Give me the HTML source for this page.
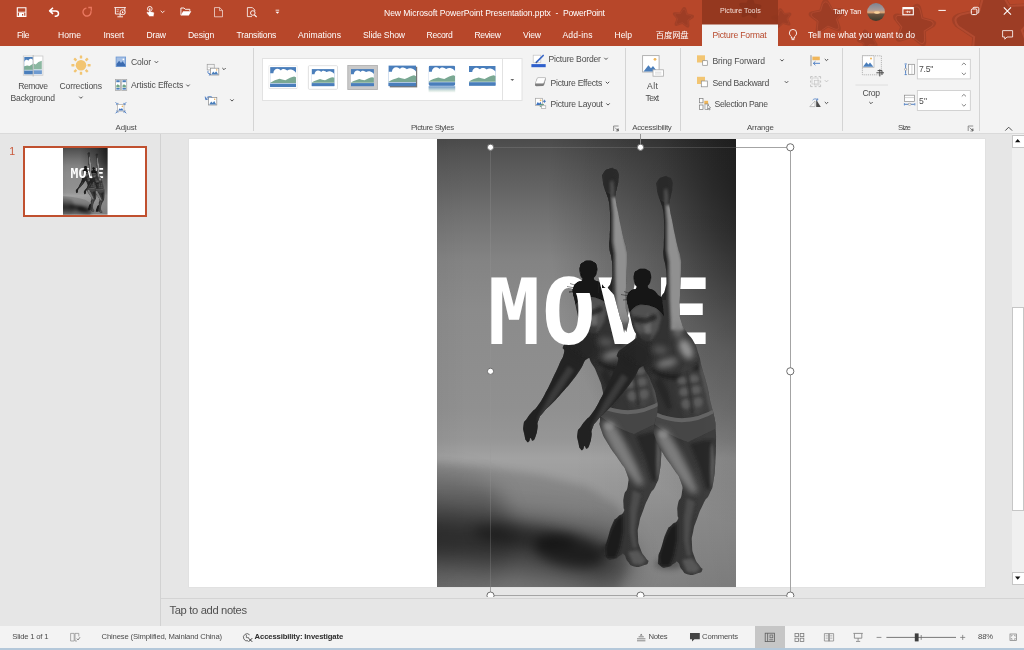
<!DOCTYPE html>
<html lang="en">
<head>
<meta charset="utf-8">
<title>New Microsoft PowerPoint Presentation.pptx - PowerPoint</title>
<style>
html,body{margin:0;padding:0}
body{width:1024px;height:650px;overflow:hidden;position:relative;background:#e6e6e6;font-family:"Liberation Sans","Noto Sans CJK SC",sans-serif;font-size:8.6px;color:#4c4c4c}
.a{position:absolute}
.t{position:absolute;white-space:nowrap;line-height:12px;height:12px}
.w{color:#fff}
svg{position:absolute;overflow:visible}
#titlebar{left:0;top:0;width:1024px;height:46px;background:#b7472a;overflow:hidden}
#ribbon{left:0;top:46px;width:1024px;height:87px;background:#f3f3f3}
.sep{position:absolute;width:1px;background:#d4d4d4;top:48px;height:83px}
.chev{position:absolute;width:4px;height:4px}
</style>
</head>
<body>
<div id="titlebar" class="a">
<svg width="1024" height="46" viewBox="0 0 1024 46" style="left:0;top:0">
<defs>
<path id="star" d="M0,-10 Q1.2,-10 2,-8.4 L3.6,-4.6 L8.2,-4.2 Q10.6,-3.6 9.2,-1.4 L5.8,1.6 L6.8,6 Q7,8.8 4.4,7.8 L0,5.4 L-4.4,7.8 Q-7,8.8 -6.8,6 L-5.8,1.6 L-9.2,-1.4 Q-10.6,-3.6 -8.2,-4.2 L-3.6,-4.6 L-2,-8.4 Q-1.2,-10 0,-10Z"/>
</defs>
<g id="stars">
<g fill="#a24027"><use href="#star" transform="translate(683,18) scale(1.1) rotate(8)"/>
<use href="#star" transform="translate(782,18.500) scale(1.05) rotate(-12)"/>
<use href="#star" transform="translate(827,17.600) scale(1.85) rotate(-6)"/>
<use href="#star" transform="translate(913.600,26) scale(2.25) rotate(10)"/>
<use href="#star" transform="translate(997,27) scale(4.500) rotate(-8)"/>
<use href="#star" transform="translate(868,40) scale(1.1) rotate(-20)"/></g>
<g fill="#9d3d25" stroke="#b24a30" stroke-width="0.5" vector-effect="non-scaling-stroke"><use href="#star" transform="translate(683,18) scale(0.86) rotate(8)"/>
<use href="#star" transform="translate(782,18.500) scale(0.82) rotate(-12)"/>
<use href="#star" transform="translate(827,17.600) scale(1.58) rotate(-6)"/>
<use href="#star" transform="translate(913.600,26) scale(1.95) rotate(10)"/>
<use href="#star" transform="translate(997,27) scale(4.150) rotate(-8)"/>
<use href="#star" transform="translate(868,40) scale(0.86) rotate(-20)"/></g>
</g>
<rect x="702" y="0" width="76" height="25" fill="#8f351d" opacity="0.86"/>
<use href="#star" transform="translate(750,8.500) scale(1.15) rotate(5)" fill="#853019" opacity="0.7"/>
<rect x="702" y="24.5" width="76" height="22" fill="#f3f3f3"/>
</svg>
<svg width="300" height="24" viewBox="0 0 300 24" style="left:0;top:0" fill="none" stroke="#fff" stroke-width="1.1">
<!-- save -->
<path d="M17.3 7.8h8.6v8.6h-8.6z"/>
<path d="M19 12.6h5.2v3.8H19z" fill="#fff" stroke="none"/>
<path d="M17.3 12.2h8.6" stroke-width="0.8"/>
<rect x="22" y="14" width="1.2" height="1.6" fill="#b7472a" stroke="none"/>
<!-- undo -->
<path d="M53 7.700L49.600 10.900l3.400 3M50 10.900h5.600a2.900 2.700 0 0 1 0 5.400h-.9" stroke-width="1.500" stroke-linejoin="round"/>
<!-- redo disabled -->
<path d="M86.400 8.100a4 4 0 1 0 4.500 3.100" stroke="#e9775f" stroke-width="1.400"/>
<path d="M88.300 7.500h3v3.200" stroke="#e9775f" stroke-width="1.300"/>
<!-- present -->
<path d="M114.3 7.6h11.6M115.4 7.8v6.2h9.4V7.8M120.1 14v2.4M117.4 16.8h5.6" stroke-width="0.9"/>
<circle cx="122.6" cy="12.2" r="2.5" fill="#b7472a" stroke-width="0.8"/>
<path d="M122 11l1.8 1.2-1.8 1.2z" fill="#fff" stroke="none"/>
<path d="M116.6 9.8h2.6M116.6 11.6h2" stroke-width="0.6"/>
<!-- touch -->
<circle cx="149.800" cy="8.800" r="2.300" stroke-width="0.900"/>
<path d="M148.900 12V8.800a.9.900 0 0 1 1.800 0v2.600l2.600.7a1.300 1.300 0 0 1 .9 1.500l-.5 2.900h-4.300l-2.600-3.300a.85.850 0 0 1 1.300-1.100z" fill="#fff" stroke="#b7472a" stroke-width="0.500"/>
<path d="M160.700 10.800l1.900 1.900 1.900-1.900" stroke-width="0.900"/>
<!-- folder -->
<path d="M180.900 15.200V8h3.200l1.100 1.300h4.600v1.600" stroke-width="0.900"/>
<path d="M180.800 15.500l2.300-4.300h8.200l-2.500 4.300z" fill="#fff" stroke="none"/>
<!-- new -->
<path d="M214.5 7.6h5.2l2.8 2.8v6.4h-8z" stroke-width="0.8" opacity="0.8"/>
<path d="M219.5 7.8v2.8h2.8" stroke-width="0.7" opacity="0.8"/>
<!-- preview -->
<path d="M252 16.6h-4.6V7.6h5l2.4 2.4v1.2" stroke-width="0.8"/>
<circle cx="252.8" cy="13" r="2.3" stroke-width="0.9"/>
<path d="M254.4 14.8l2.2 2.2" stroke-width="1.1"/>
<!-- customize -->
<path d="M275.6 10.2h3.6" stroke-width="0.8"/>
<path d="M275.5 11.8h3.8l-1.9 2z" fill="#fff" stroke="none"/>
</svg>
<!-- window controls -->
<svg width="130" height="46" viewBox="0 0 130 46" style="left:894px;top:0" fill="none" stroke="#fff" stroke-width="1">
<rect x="8.9" y="7.6" width="10.4" height="7.2" stroke-width="1.1"/>
<path d="M9 8.4h10" stroke-width="1.8"/>
<path d="M11.6 11.8h2.4M14.2 11.8l-1.2-1M14.2 11.8l-1.2 1M16.6 11.8h-2M14.8 11.8l1-1M14.8 11.8l1 1" stroke-width="0.7"/>
<path d="M44.400 10.400h7.400" stroke-width="1"/>
<rect x="77.300" y="9" width="5.600" height="5.600" rx="1.200" stroke-width="1"/>
<path d="M79 8.800V8.300a1 1 0 0 1 1-1h3.600a1.200 1.200 0 0 1 1.200 1.200v3.600a1 1 0 0 1-1 1h-.6" stroke-width="0.900"/>
<path d="M109.800 7.400l7.200 7.200M117 7.400l-7.200 7.200" stroke-width="1.100"/>
<path d="M108.600 30.600h10v6.400h-5.600l-2.200 2.200v-2.200h-2.200z" stroke-width="0.9" opacity="0.9"/>
</svg>
<!-- avatar -->
<svg width="20" height="20" viewBox="0 0 20 20" style="left:866px;top:2px">
<defs>
<linearGradient id="av" x1="0" y1="0" x2="0" y2="1">
<stop offset="0" stop-color="#7d8494"/><stop offset="0.38" stop-color="#a89a98"/><stop offset="0.52" stop-color="#e0a878"/><stop offset="0.62" stop-color="#6b5440"/><stop offset="1" stop-color="#3c3a2c"/>
</linearGradient>
<clipPath id="avc"><circle cx="10" cy="10" r="8.900"/></clipPath>
</defs>
<circle cx="10" cy="10" r="8.900" fill="url(#av)"/>
<ellipse cx="11" cy="10.600" rx="3" ry="1.300" fill="#ffd9a0" opacity="0.85" clip-path="url(#avc)"/>
</svg>
<!-- lightbulb -->
<svg width="12" height="14" viewBox="0 0 12 14" style="left:787px;top:28px" fill="none" stroke="#fff" stroke-width="0.9">
<path d="M4.400 8.600C3 7.400 2.400 6.400 2.400 5a3.600 3.600 0 0 1 7.200 0c0 1.400-.6 2.400-2 3.600v1.600H4.400z"/>
<path d="M4.600 11.600h2.800" stroke-width="0.9"/>
</svg>
</div>
<div id="ribbon" class="a"></div>
<div class="a" style="left:0;top:133px;width:1024px;height:1px;background:#dadada"></div>
<div class="sep" style="left:253px"></div>
<div class="sep" style="left:625px"></div>
<div class="sep" style="left:680px"></div>
<div class="sep" style="left:842px"></div>
<div class="sep" style="left:978.5px"></div>
<svg width="1024" height="87" viewBox="0 46 1024 87" style="left:0;top:46px" fill="none">
<defs>
<g id="pic">
<rect x="0" y="0" width="28" height="22" fill="#4a7ebb"/>
<path d="M0 6.700H3.400C3.600 3.400 6 1.600 8 1.900 10 2 11 3.200 11.600 3.700 12.600 2.200 14.400 1.900 15.600 2.300 17.200 2.600 18 3.400 18.600 3.800 20 2.600 22 2.500 23.600 3 25.600 3.600 27 5 28 6.200V18.400H0z" fill="#fff"/>
<path d="M0 17.400L2.600 15.800 5 14.600 7.600 13.800 10.200 12.900 13 13.700 16.500 14.500 19 13.200 21.600 11.900 24 11 26 10.400 28 11.300V17.700H0z" fill="#7aa893"/>
<rect x="0" y="18.400" width="28" height="3.600" fill="#4a7ebb"/>
</g>
<linearGradient id="refl" x1="0" y1="0" x2="0" y2="1"><stop offset="0" stop-color="#4a7ebb" stop-opacity="0.85"/><stop offset="0.45" stop-color="#6f9fb4" stop-opacity="0.5"/><stop offset="0.7" stop-color="#8fb8a4" stop-opacity="0.3"/><stop offset="1" stop-color="#8fb8a4" stop-opacity="0"/></linearGradient>
<filter id="b1" x="-20%" y="-20%" width="140%" height="140%"><feGaussianBlur stdDeviation="0.900"/></filter>
<filter id="b2" x="-20%" y="-20%" width="140%" height="140%"><feGaussianBlur stdDeviation="0.600"/></filter>
</defs>
<!-- gallery -->
<rect x="262.500" y="58.500" width="259.500" height="42" fill="#fff" stroke="#e2e2e2" stroke-width="1"/>
<path d="M502.500 58.500v42" stroke="#e2e2e2"/>
<path d="M510.400 79h3.800l-1.900 2.100z" fill="#666"/>
<!-- style1 -->
<rect x="269.300" y="66.400" width="27.600" height="22.600" fill="#bbb" opacity="0.7" filter="url(#b2)"/>
<rect x="268.900" y="65.800" width="28.200" height="22.800" fill="#fff" stroke="#dedede" stroke-width="0.500"/>
<use href="#pic" transform="translate(270.200,67.100) scale(0.921,0.905)"/>
<!-- style2 -->
<rect x="308.400" y="65.700" width="29.100" height="23.600" rx="1" fill="#fff" stroke="#d9d9d9" stroke-width="0.800"/>
<use href="#pic" transform="translate(311.800,69.100) scale(0.804,0.773)"/>
<!-- style3 -->
<rect x="347.800" y="65.500" width="29.600" height="24" fill="#c9c9c9" stroke="#b2b2b2" stroke-width="0.900"/>
<use href="#pic" transform="translate(351,69.100) scale(0.818,0.773)"/>
<!-- style4 -->
<rect x="389.800" y="66.800" width="27.400" height="20.600" fill="#4a4a4a" opacity="0.750" filter="url(#b2)"/>
<use href="#pic" transform="translate(388.600,65.600) scale(0.979,0.932)"/>
<!-- style5 -->
<g>
<rect x="428.600" y="86.300" width="26.600" height="6.500" fill="url(#refl)"/>
<clipPath id="rc5"><rect x="428.600" y="65.600" width="26.600" height="20.200" rx="1.800"/></clipPath>
<g clip-path="url(#rc5)"><use href="#pic" transform="translate(428.600,65.600) scale(0.950,0.918)"/></g>
</g>
<!-- style6 -->
<g filter="url(#b2)"><use href="#pic" transform="translate(469,66) scale(0.946,0.890)"/></g>
<!-- remove background -->
<rect x="23.300" y="56" width="19.600" height="19.200" fill="#fff" stroke="#c9c9c9" stroke-width="0.800"/>
<rect x="24.300" y="57" width="8.600" height="17.200" fill="#4a7ebb"/>
<path d="M24.300 66.500v-4.500c1-2.800 3.200-2.600 4-1.200 1-2.400 3.600-2.600 4.600-.8v6.500z" fill="#fff"/>
<path d="M24.300 70.500v-4.200l2.800-.8 2.400.6 3.400-2.300v6.700z" fill="#7fae96"/>
<rect x="24.300" y="70.200" width="8.600" height="4" fill="#4a7ebb"/>
<rect x="24.300" y="69.800" width="8.600" height="0.800" fill="#d8e6ee"/>
<path d="M33.400 69.500v-6l2.300 1 2.700-2.400 3.400-1.300v8.700z" fill="#8bb7a0"/>
<rect x="33.400" y="69.800" width="8.500" height="4.400" fill="#6f9bd0"/>
<rect x="33.400" y="69.600" width="8.500" height="0.700" fill="#e3edf3"/>
<path d="M33.150 55v21.500" stroke="#b9b9b9" stroke-width="0.900"/>
<!-- corrections sun -->
<g fill="#f2c572">
<circle cx="81" cy="65.200" r="5.300"/>
<g id="rays"><rect x="79.800" y="55.600" width="2.400" height="3" rx="0.300"/><rect x="79.800" y="71.800" width="2.400" height="3" rx="0.300"/><rect x="71.400" y="64" width="3" height="2.400" rx="0.300"/><rect x="87.600" y="64" width="3" height="2.400" rx="0.300"/></g>
<use href="#rays" transform="rotate(45 81 65.200)"/>
</g>
<path d="M79.200 96.600l1.700 1.700 1.700-1.700" stroke="#505050" stroke-width="1"/>
<!-- color -->
<rect x="115.700" y="56.600" width="10.300" height="10.400" fill="#6f99d2"/>
<rect x="116.500" y="57.400" width="8.700" height="8.800" fill="#a3bfe5"/>
<path d="M116.500 66.200v-2.200l2.600-3.200 1.900 2.100 1.500-1.700 2.700 3.200v1.800z" fill="#3b6bb0"/>
<circle cx="123.400" cy="59.300" r="0.900" fill="#fff"/>
<path d="M154.700 61.200l1.700 1.700 1.700-1.700" stroke="#505050" stroke-width="1"/>
<!-- artistic effects -->
<g id="aep"><rect x="115.500" y="79.400" width="5" height="11" fill="#fff" stroke="#a8a8a8" stroke-width="0.800"/>
<rect x="116.300" y="80.200" width="3.400" height="2" fill="#4a7ebb"/>
<path d="M116.300 87.600v-2.200l1.400-1.200 2 1.400v2z" fill="#6fa588"/>
<rect x="116.300" y="88" width="3.400" height="1.600" fill="#4a7ebb"/></g>
<use href="#aep" transform="translate(6.200,0)"/>
<path d="M186.300 84.600l1.700 1.700 1.700-1.700" stroke="#505050" stroke-width="1"/>
<!-- compress -->
<g stroke="#3f74c0" stroke-width="0.900">
<path d="M115.600 102.300l2.200 2.200M126.200 102.300l-2.200 2.200M115.600 113.300l2.200-2.200M126.200 113.300l-2.200-2.200"/>
<path d="M116.200 104.600h1.700v-1.700M125.600 104.600h-1.700v-1.700M116.200 111h1.700v1.700M125.600 111h-1.700v1.700" stroke-width="0.800"/>
</g>
<rect x="117.600" y="104.500" width="6.400" height="6.600" fill="#fff" stroke="#a8a8a8" stroke-width="0.700"/>
<path d="M118.200 110.400l1.500-2.200 1.200 1.100 1-1.300 1.600 2.400z" fill="#3f74c0"/>
<circle cx="122.400" cy="106.400" r="0.800" fill="#f0b65a"/>
<!-- change picture -->
<rect x="207.200" y="64.300" width="7" height="5.600" fill="#fff" stroke="#9a9a9a" stroke-width="0.700"/>
<path d="M207.800 66h5.800M207.800 67.600h5.800" stroke="#c5c5c5" stroke-width="0.500"/>
<rect x="210.600" y="68.200" width="8.200" height="6.800" fill="#fff" stroke="#8a8a8a" stroke-width="0.700"/>
<path d="M211.200 74.400l2-2.800 1.500 1.400 1.500-1.800 2 3.200z" fill="#4a7ebb"/>
<circle cx="216.700" cy="69.900" r="0.700" fill="#e8a33d"/>
<path d="M208.200 70.800c-1 1.600.2 3.400 2 3.600M209.200 73.200l1.200 1.300-1.500.8" stroke="#3f74c0" stroke-width="0.800"/>
<path d="M222.300 68l1.700 1.700 1.700-1.700" stroke="#505050" stroke-width="1"/>
<!-- reset picture -->
<rect x="208.600" y="97.400" width="8.200" height="7.600" fill="#fff" stroke="#8a8a8a" stroke-width="0.700"/>
<path d="M209.200 104.400l2-3 1.500 1.500 1.500-2 2 3.500z" fill="#4a7ebb"/>
<circle cx="214.700" cy="99.300" r="0.700" fill="#e8a33d"/>
<path d="M206 99.400c.6-2.800 4.200-3.800 6.200-2M205.200 96.600l.6 3 2.800-.8" stroke="#3f74c0" stroke-width="0.900"/>
<path d="M230.300 99.400l1.700 1.700 1.700-1.700" stroke="#505050" stroke-width="1"/>
<!-- picture border -->
<rect x="531.400" y="64.100" width="14.300" height="3.100" fill="#2f60cc"/>
<rect x="533.200" y="55.200" width="7.600" height="7.400" fill="#fff" stroke="#c4c4c4" stroke-width="0.700"/>
<path d="M536.300 62.400L543.200 55.500" stroke="#3a68c8" stroke-width="1.700" stroke-linecap="round"/>
<path d="M535.800 63l1.400-.4-1-1z" fill="#555"/>
<path d="M604.300 57.800l1.700 1.700 1.700-1.700" stroke="#505050" stroke-width="1"/>
<!-- picture effects -->
<path d="M535 84.200l1.800-5.400q.4-1.400 1.800-1.400h6q1.600 0 1.200 1.400l-1.400 5.400q-.4 1.600-1.600 1.800l-6.400.2q-1.800-.2-1.400-2z" fill="#7d7d7d"/>
<path d="M535.600 82.600l1.600-4q.4-1 1.600-1h5.600q1.400 0 1 1l-1.400 4q-.4 1-1.600 1h-6q-1.200 0-.8-1z" fill="#fdfdfd" stroke="#b0b0b0" stroke-width="0.500"/>
<path d="M605.800 81.800l1.700 1.700 1.700-1.700" stroke="#505050" stroke-width="1"/>
<!-- picture layout -->
<rect x="535.400" y="98.300" width="7" height="7.200" fill="#fff" stroke="#a2a2a2" stroke-width="0.700"/>
<path d="M536 105l1.800-3 1.400 1.400 1.200-1.600 1.600 3.200z" fill="#3f74c0"/>
<circle cx="540.600" cy="100.300" r="0.900" fill="#f0b65a"/>
<path d="M544.400 99.800v3M542.900 101.300h3" stroke="#3f74c0" stroke-width="0.900"/>
<path d="M539.800 104.600h4.200M539.800 106.400h3.200" stroke="#5a9a7c" stroke-width="0.900"/>
<rect x="541.400" y="105.800" width="4.400" height="2.800" fill="#fff" stroke="#9a9a9a" stroke-width="0.600"/>
<path d="M606.300 103.400l1.700 1.700 1.700-1.700" stroke="#505050" stroke-width="1"/>
<!-- dialog launchers -->
<g id="dl" stroke="#666" stroke-width="0.700"><path d="M618.600 126h-5v5"/><path d="M615 127.600l3.200 3.200M618.400 128.400v2.600h-2.600" /><path d="M617 129l1.600 1.600" stroke-width="1.200"/></g>
<use href="#dl" transform="translate(354.600,0)"/>
<!-- alt text -->
<rect x="642.600" y="55.600" width="16.500" height="16.400" fill="#fff" stroke="#ababab" stroke-width="0.900"/>
<circle cx="655" cy="59.300" r="1.400" fill="#f0b65a"/>
<path d="M643.600 71.400l4.800-6.200 2.600 3 2-2.200 4.200 5.400z" fill="#4a7ebb"/>
<rect x="653" y="69.800" width="10.400" height="6.400" fill="#fff" stroke="#ababab" stroke-width="0.800"/>
<path d="M655 72.200h6.400M655 74h6.400" stroke="#c4c4c4" stroke-width="0.600"/>
<!-- bring forward -->
<rect x="697" y="55.300" width="8" height="7.200" fill="#f2c572"/>
<rect x="702.700" y="60.700" width="4.600" height="4.600" fill="#fff" stroke="#8a8a8a" stroke-width="0.700"/>
<path d="M780.300 59.400l1.700 1.700 1.700-1.700" stroke="#505050" stroke-width="1"/>
<!-- send backward -->
<rect x="697" y="76.800" width="8" height="7.200" fill="#f2c572"/>
<rect x="701.300" y="81" width="6" height="5.800" fill="#fff" stroke="#8a8a8a" stroke-width="0.700"/>
<path d="M784.800 81.200l1.700 1.700 1.700-1.700" stroke="#505050" stroke-width="1"/>
<!-- selection pane -->
<rect x="699.400" y="98.400" width="3.600" height="4.400" fill="#fff" stroke="#7a7a7a" stroke-width="0.700"/>
<rect x="699.400" y="105" width="3.600" height="4.400" fill="#fff" stroke="#7a7a7a" stroke-width="0.700"/>
<rect x="704.300" y="100.800" width="3.800" height="3.400" fill="#f0b65a"/>
<rect x="705" y="104" width="3.400" height="5.400" fill="#fff" stroke="#7a7a7a" stroke-width="0.600"/>
<path d="M707.400 104.600v4.600l1.100-1 .9 1.800.7-.3-.9-1.800h1.500z" fill="#fff" stroke="#555" stroke-width="0.500"/>
<!-- align -->
<path d="M811 55.200v11" stroke="#8a8a8a" stroke-width="0.900"/>
<rect x="812.400" y="56.600" width="7.400" height="3.600" fill="#f0b65a"/>
<path d="M820 63.300h-6.600M815.400 61.400l-2 1.900 2 1.900" stroke="#3f74c0" stroke-width="0.900"/>
<path d="M824.800 59l1.700 1.700 1.700-1.700" stroke="#505050" stroke-width="1"/>
<!-- group disabled -->
<g stroke="#bdbdbd" stroke-width="0.700">
<rect x="812" y="78" width="6" height="6" stroke="#c9c9c9"/>
<rect x="814.600" y="80.600" width="4.400" height="4.400" stroke="#c9c9c9"/>
<path d="M810.600 76.600h2M814.600 76.600h2M818.600 76.600h2M820.600 76.600v2M820.600 80.600v2M820.600 84.600v2M810.600 86.600h2M814.600 86.600h2M818.600 86.600h2M810.600 76.600v2M810.600 80.600v2M810.600 84.600v2" stroke-width="0.900"/>
</g>
<path d="M824.800 80.200l1.700 1.700 1.700-1.700" stroke="#bdbdbd" stroke-width="0.900"/>
<!-- rotate -->
<path d="M815 106.600h-5.200l5.200-5.600z" fill="#fafafa" stroke="#9a9a9a" stroke-width="0.600"/>
<path d="M816.200 106.900h4.600l-4.600-7.300z" fill="#4d4d4d"/>
<path d="M812.600 100.200c1.200-1.600 3.400-1.800 4.800-.6M817.600 98.300l.2 1.700-1.800.1" stroke="#3f74c0" stroke-width="0.700"/>
<path d="M824.800 102l1.700 1.700 1.700-1.700" stroke="#505050" stroke-width="1"/>
<!-- crop -->
<rect x="862.400" y="55.800" width="19" height="19" stroke="#9c9c9c" stroke-width="0.700" stroke-dasharray="1.200 0.900"/>
<rect x="862.400" y="55.800" width="11.600" height="11.800" fill="#fff" stroke="#b0b0b0" stroke-width="0.700"/>
<circle cx="871" cy="58.600" r="1" fill="#f0b65a"/>
<path d="M863 66.800l3.400-4.600 2 2.200 1.600-1.800 3.400 4.200z" fill="#4a7ebb"/>
<path d="M879.800 69.400v7M876.400 72.800h7.600M877.600 70.600h4.400v4.400" stroke="#4a4a4a" stroke-width="1"/>
<path d="M855.500 85h32.500" stroke="#dcdcdc" stroke-width="0.900"/>
<path d="M869.300 102l1.700 1.700 1.700-1.700" stroke="#505050" stroke-width="1"/>
<!-- size inputs -->
<rect x="917.300" y="59.300" width="53" height="19.600" fill="#fff" stroke="#c9c9c9" stroke-width="0.800"/>
<rect x="917.300" y="90.600" width="53" height="19.900" fill="#fff" stroke="#c9c9c9" stroke-width="0.800"/>
<g stroke="#666" stroke-width="0.800">
<path d="M961.800 65l2.100-2 2.100 2M961.800 72.800l2.100 2 2.100-2M961.800 96.400l2.100-2 2.100 2M961.800 104.200l2.100 2 2.100-2"/>
</g>
<!-- height icon -->
<rect x="908.400" y="64.300" width="6.200" height="10" fill="#fff" stroke="#8a8a8a" stroke-width="0.700"/>
<path d="M911.900 64.300v10" stroke="#b5b5b5" stroke-width="0.600"/>
<path d="M905.600 64.800v9M904.600 64h2.200M904.600 74.600h2.200" stroke="#3f74c0" stroke-width="0.900"/>
<circle cx="905.600" cy="69.300" r="1.100" fill="#fff" stroke="#8a8a8a" stroke-width="0.600"/>
<!-- width icon -->
<rect x="904.600" y="95.200" width="10" height="6.200" fill="#fff" stroke="#8a8a8a" stroke-width="0.700"/>
<path d="M904.600 97.600h10" stroke="#b5b5b5" stroke-width="0.600"/>
<path d="M905 104.300h9.200M904.400 103.200v2.200M914.800 103.200v2.200" stroke="#3f74c0" stroke-width="0.900"/>
<ellipse cx="909.600" cy="104.300" rx="1.500" ry="1" fill="#fff" stroke="#8a8a8a" stroke-width="0.600"/>
<!-- collapse -->
<path d="M1005.300 130.600l3.400-3.400 3.400 3.400" stroke="#505050" stroke-width="1"/>
</svg>
<!-- photo definition -->
<svg width="0" height="0" style="left:0;top:0">
<defs>
<linearGradient id="bgv" x1="0" y1="0" x2="0" y2="1">
<stop offset="0" stop-color="#4b4b4b"/><stop offset="0.03" stop-color="#535353"/><stop offset="0.114" stop-color="#656565"/><stop offset="0.18" stop-color="#737373"/><stop offset="0.27" stop-color="#838383"/><stop offset="0.38" stop-color="#8b8b8b"/><stop offset="0.6" stop-color="#909090"/><stop offset="0.67" stop-color="#969696"/><stop offset="0.712" stop-color="#a2a2a2"/><stop offset="0.76" stop-color="#9c9c9c"/><stop offset="0.85" stop-color="#919191"/><stop offset="1" stop-color="#868686"/>
</linearGradient>
<linearGradient id="bgh" gradientUnits="userSpaceOnUse" x1="0" y1="0" x2="299" y2="0">
<stop offset="0" stop-color="#000" stop-opacity="0.03"/><stop offset="0.1" stop-color="#000" stop-opacity="0"/><stop offset="0.45" stop-color="#000" stop-opacity="0"/><stop offset="1" stop-color="#000" stop-opacity="0.08"/>
</linearGradient>
<radialGradient id="bgl" gradientUnits="userSpaceOnUse" cx="0" cy="0" r="1" gradientTransform="translate(330,60) scale(220,330)"><stop offset="0" stop-color="#000" stop-opacity="0.74"/><stop offset="0.25" stop-color="#000" stop-opacity="0.55"/><stop offset="0.5" stop-color="#000" stop-opacity="0.30"/><stop offset="1" stop-color="#000" stop-opacity="0"/></radialGradient>
<linearGradient id="pen" gradientUnits="userSpaceOnUse" x1="0" y1="326" x2="0" y2="460"><stop offset="0" stop-color="#000" stop-opacity="0.04"/><stop offset="0.25" stop-color="#000" stop-opacity="0.26"/><stop offset="0.5" stop-color="#000" stop-opacity="0.30"/><stop offset="0.75" stop-color="#000" stop-opacity="0.16"/><stop offset="1" stop-color="#000" stop-opacity="0.02"/></linearGradient>
<filter id="fb1" filterUnits="userSpaceOnUse" x="-100" y="-100" width="1000" height="800"><feGaussianBlur stdDeviation="0.7"/></filter>
<filter id="fb2" filterUnits="userSpaceOnUse" x="-100" y="-100" width="1000" height="800"><feGaussianBlur stdDeviation="1.8"/></filter>
<filter id="fb3" filterUnits="userSpaceOnUse" x="-100" y="-100" width="1000" height="800"><feGaussianBlur stdDeviation="3"/></filter>
<filter id="fb4" filterUnits="userSpaceOnUse" x="-100" y="-100" width="1000" height="800"><feGaussianBlur stdDeviation="4"/></filter>
<filter id="fb6" filterUnits="userSpaceOnUse" x="-100" y="-100" width="1000" height="800"><feGaussianBlur stdDeviation="6"/></filter>
<filter id="fb14" filterUnits="userSpaceOnUse" x="-100" y="-100" width="1000" height="800"><feGaussianBlur stdDeviation="14"/></filter>
<filter id="fb10" filterUnits="userSpaceOnUse" x="-100" y="-100" width="1000" height="800"><feGaussianBlur stdDeviation="10"/></filter>
<linearGradient id="figg" x1="0" y1="0" x2="1" y2="0"><stop offset="0" stop-color="#222"/><stop offset="0.55" stop-color="#303030"/><stop offset="1" stop-color="#3e3e3e"/></linearGradient>
<path id="figp" d="M664.0 176.5C667.5 175.2 665.3 175.7 668.0 177.0C670.7 178.3 670.6 176.8 672.0 180.5C673.4 184.2 672.6 183.0 672.3 188.0C672.0 193.0 671.9 190.5 671.0 195.5C670.1 200.5 669.9 198.2 669.6 203.0C669.3 207.8 669.2 204.3 670.0 210.0C670.8 215.7 670.3 211.7 672.0 220.0C673.7 228.3 673.0 225.7 675.0 235.0C677.0 244.3 676.2 240.7 678.0 248.0C679.8 255.3 679.5 250.3 680.5 257.0C681.5 263.7 681.0 259.7 681.0 268.0C681.0 276.3 680.8 273.0 680.5 282.0C680.2 291.0 680.3 285.8 680.0 295.0C679.7 304.2 679.2 300.6 679.6 309.5C680.0 318.4 679.1 314.4 681.3 321.8C683.5 329.2 682.1 325.0 686.2 331.6C690.3 338.2 689.5 334.1 693.6 341.5C697.7 348.9 695.6 344.8 698.5 353.8C701.4 362.8 699.3 357.9 702.2 368.5C705.1 379.1 704.2 374.2 707.1 385.7C710.0 397.2 708.3 392.3 710.8 403.0C713.3 413.7 712.8 408.7 714.5 417.7C716.2 426.7 715.3 420.8 715.8 430.0C716.3 439.2 716.2 434.4 716.0 445.4C715.8 456.4 716.1 451.2 715.3 463.0C714.5 474.8 715.4 470.7 713.5 480.9C711.6 491.1 713.1 485.9 709.7 493.5C706.3 501.1 707.6 495.2 703.4 503.7C699.2 512.2 700.4 509.6 697.0 518.9C693.6 528.2 694.9 523.2 693.2 531.6C691.5 540.0 691.6 535.8 692.0 544.2C692.4 552.6 692.0 549.7 694.5 556.9C697.0 564.1 697.0 561.4 699.6 565.8C702.2 570.2 703.2 567.4 702.3 570.0C701.4 572.6 701.7 572.1 697.0 573.6C692.3 575.1 693.3 575.7 688.2 574.4C683.1 573.1 685.2 573.6 681.8 569.6C678.4 565.6 680.5 564.5 678.0 562.5C675.5 560.5 677.6 562.0 674.2 563.5C670.8 565.0 672.5 566.2 667.9 567.0C663.3 567.8 663.5 568.7 660.3 565.8C657.1 562.9 657.9 564.5 658.3 558.2C658.7 551.9 658.8 555.7 661.6 546.8C664.4 537.9 663.2 538.9 666.6 531.6C670.0 524.3 668.0 528.9 671.7 525.0C675.4 521.1 675.7 523.7 677.6 520.0C679.5 516.3 677.4 519.2 677.5 513.8C677.6 508.4 676.6 510.5 678.0 503.7C679.4 496.9 680.9 501.1 681.8 493.5C682.7 485.9 683.5 489.4 680.6 480.9C677.7 472.4 678.9 477.3 673.0 468.0C667.1 458.7 668.7 463.1 662.8 453.0C656.9 442.9 658.1 446.2 655.2 437.7C652.3 429.2 653.9 433.5 654.0 427.6C654.1 421.7 654.3 425.9 655.5 420.0C656.7 414.1 657.2 417.3 657.5 410.0C657.8 402.7 658.3 406.7 656.5 398.0C654.7 389.3 655.5 392.7 652.0 384.0C648.5 375.3 649.7 377.7 646.0 372.0C642.3 366.3 645.0 365.0 641.0 367.0C637.0 369.0 639.0 370.7 634.0 378.0C629.0 385.3 631.7 381.8 626.0 389.0C620.3 396.2 623.0 392.7 617.0 399.5C611.0 406.3 614.3 402.8 608.0 409.5C601.7 416.2 603.2 413.3 598.0 419.5C592.8 425.7 594.7 422.5 592.5 428.0C590.3 433.5 592.3 431.0 591.5 436.0C590.7 441.0 591.5 438.8 590.0 443.0C588.5 447.2 588.8 447.5 587.0 448.5C585.2 449.5 585.8 445.7 584.5 446.0C583.2 446.3 584.3 448.5 583.0 449.5C581.7 450.5 582.0 451.2 580.5 449.0C579.0 446.8 579.5 448.3 578.5 443.0C577.5 437.7 576.7 438.5 577.5 433.0C578.3 427.5 578.2 430.8 581.0 426.5C583.8 422.2 582.3 424.3 586.0 420.0C589.7 415.7 587.7 419.5 592.0 413.5C596.3 407.5 594.3 410.5 599.0 402.0C603.7 393.5 601.3 397.7 606.0 388.0C610.7 378.3 609.0 382.0 613.0 373.0C617.0 364.0 616.5 367.4 618.0 361.0C619.5 354.6 615.1 358.7 617.4 353.8C619.7 348.9 619.5 350.9 624.8 346.4C630.1 341.9 629.5 343.7 633.4 340.2C637.3 336.7 636.5 339.7 636.5 336.0C636.5 332.3 635.4 334.6 633.5 329.0C631.6 323.4 632.5 326.3 630.9 319.3C629.3 312.3 629.9 314.1 628.6 308.0C627.3 301.9 627.4 305.3 627.0 301.0C626.6 296.7 626.2 298.5 627.5 295.0C628.8 291.5 628.0 292.9 631.0 290.5C634.0 288.1 635.4 290.5 636.5 287.8C637.6 285.1 635.0 286.9 634.2 282.5C633.4 278.1 632.9 278.6 634.0 274.5C635.1 270.4 634.7 272.1 637.5 270.2C640.3 268.3 639.1 268.9 642.4 268.8C645.7 268.7 644.7 268.1 647.5 270.0C650.3 271.9 649.8 270.7 650.8 274.5C651.8 278.3 651.5 277.3 650.6 281.5C649.7 285.7 646.9 284.2 648.0 287.2C649.1 290.2 650.2 287.6 654.0 290.5C657.8 293.4 656.7 294.6 659.5 296.0C662.3 297.4 660.4 297.5 662.4 294.8C664.4 292.1 664.1 293.6 665.5 288.0C666.9 282.4 666.5 285.3 666.5 278.0C666.5 270.7 666.5 273.3 665.5 266.0C664.5 258.7 664.1 263.0 663.5 256.0C662.9 249.0 663.6 253.0 663.8 245.0C664.0 237.0 664.1 240.3 664.2 232.0C664.3 223.7 664.4 227.3 664.0 220.0C663.6 212.7 664.0 215.7 663.0 210.0C662.0 204.3 662.5 207.7 661.0 203.0C659.5 198.3 659.9 201.0 658.5 196.0C657.1 191.0 657.1 193.0 656.8 188.0C656.5 183.0 655.1 184.8 657.5 181.0C659.9 177.2 660.5 177.8 664.0 176.5Z"/>
<clipPath id="figc"><use href="#figp"/></clipPath>
<g id="fig">
<use href="#figp" fill="url(#figg)" filter="url(#fb1)"/>
<g clip-path="url(#figc)">
<!-- raised arm -->
<path d="M665.500 205L667 222 667 250 669 262 669.500 300 671 330 684 330 682 300 682 262 679 248 674 220 671 205Z" fill="#989898" filter="url(#fb2)" opacity="0.92"/>
<path d="M656 174H675V202H656Z" fill="#1c1c1c" opacity="0.35" filter="url(#fb2)"/>
<path d="M664 190L667 188 668.500 198 667 206 664.500 204Z" fill="#6c6c6c" opacity="0.6" filter="url(#fb2)"/>
<path d="M660 200L662 222 662 256 664 290 660 300 666 300 667 262 665 250 665 222 664 202Z" fill="#1e1e1e" filter="url(#fb1)" opacity="0.6"/>
<!-- face -->
<path d="M630 309L640 304 650 304 658 308 661 318 658 330 651 341 643 339 635 329Z" fill="#555" filter="url(#fb2)" opacity="0.9"/>
<path d="M643 322L648 313 651 322 651 333 646 337Z" fill="#747474" filter="url(#fb2)" opacity="0.7"/>
<path d="M632 316L644 318 656 314 657 319 646 324 634 322Z" fill="#1c1c1c" filter="url(#fb2)" opacity="0.75"/>
<path d="M640 333L652 334 650 341 643 339Z" fill="#2a2a2a" filter="url(#fb2)" opacity="0.6"/>
<!-- hair -->
<path d="M626 300Q627 291 636 287.500L633 273Q642 263 652 273L648.500 287.500Q658 290 662 299L664 316Q660 310 655 307.500 648 304 640 304.500 633 306 629.500 313Z" fill="#121212" filter="url(#fb1)"/>
<!-- left shoulder dark -->
<path d="M618 352L636 338 650 346 652 364 640 370 626 366Z" fill="#222" filter="url(#fb3)" opacity="0.6"/>
<!-- shoulder / chest highlights -->
<ellipse cx="686" cy="349" rx="6" ry="11" fill="#a0a0a0" filter="url(#fb3)" opacity="0.9" transform="rotate(-28 686 349)"/>
<ellipse cx="678" cy="330" rx="5" ry="8" fill="#808080" filter="url(#fb3)" opacity="0.75"/>
<ellipse cx="667" cy="363" rx="11" ry="4" fill="#8a8a8a" filter="url(#fb3)" opacity="0.85" transform="rotate(-14 667 363)"/>
<ellipse cx="660" cy="350" rx="8" ry="4" fill="#6a6a6a" filter="url(#fb3)" opacity="0.7" transform="rotate(10 660 350)"/>
<path d="M652 368Q668 378 684 372 694 368 700 362L702 368Q690 378 676 380 662 380 652 372Z" fill="#161616" filter="url(#fb2)" opacity="0.65"/>
<ellipse cx="692" cy="392" rx="13" ry="24" fill="#4c4c4c" filter="url(#fb3)" opacity="0.8" transform="rotate(-10 692 392)"/>
<g fill="#646464" filter="url(#fb2)" opacity="0.75">
<ellipse cx="682" cy="381" rx="4.500" ry="4"/><ellipse cx="694" cy="379" rx="4.500" ry="4"/>
<ellipse cx="684" cy="392" rx="4.500" ry="4.500"/><ellipse cx="696" cy="390" rx="4.500" ry="4.500"/>
<ellipse cx="686" cy="404" rx="4.500" ry="5"/><ellipse cx="698" cy="402" rx="4.500" ry="5"/>
</g>
<path d="M687 372L690 392 692 410" stroke="#1c1c1c" stroke-width="1.600" fill="none" filter="url(#fb2)" opacity="0.8"/>
<path d="M678 386L702 383M680 398L704 395" stroke="#262626" stroke-width="1.200" fill="none" filter="url(#fb2)" opacity="0.6"/>
<ellipse cx="692" cy="412" rx="1.600" ry="2.200" fill="#141414" opacity="0.6" filter="url(#fb2)"/>
<path d="M701 360L707 384 712 406 716 426 712 420 706 392 699 366Z" fill="#707070" filter="url(#fb2)" opacity="0.6"/>
<path d="M660 376L668 392 672 408 668 410 660 394 655 382Z" fill="#1a1a1a" filter="url(#fb2)" opacity="0.5"/>
<!-- briefs -->
<path d="M655 412Q686 426 716 408L717 428Q700 436 688 442 670 436 654 424Z" fill="#4a4a4a" filter="url(#fb1)" opacity="0.9"/>
<path d="M655 412Q686 426 716 408L716 412Q686 430 655 416Z" fill="#6c6c6c" filter="url(#fb1)" opacity="0.8"/>
<!-- thighs -->
<path d="M656 428L667 430 679 450 692 476 698 492 692 494 679 478 665 456 657 440Z" fill="#8a8a8a" filter="url(#fb3)" opacity="0.85"/>
<ellipse cx="663" cy="434" rx="5" ry="4" fill="#a0a0a0" filter="url(#fb2)" opacity="0.4"/>
<path d="M690 444L700 470 706 490 712 488 714 462 715 440 704 440Z" fill="#1e1e1e" filter="url(#fb2)" opacity="0.6"/>
<path d="M712.500 440L715 462 713.500 482 711 490 710 470 710.500 448Z" fill="#666" filter="url(#fb2)" opacity="0.8"/>
<!-- lower legs -->
<path d="M687 498L695 502 691 520 689 540 691 556 687 556 684 540 684 518Z" fill="#565656" filter="url(#fb2)" opacity="0.7"/>
<path d="M660 566L659 556 664 540 670 527 677 522 677 540 674 556 670 566Z" fill="#141414" filter="url(#fb2)" opacity="0.8"/>
<path d="M682 560L692 558 700 568 696 573 687 572Z" fill="#5e5e5e" filter="url(#fb2)" opacity="0.8"/>
<!-- hanging arm dark -->
<path d="M620 352L642 368 604 424 590 450 576 448 578 428 604 388Z" fill="#202020" filter="url(#fb2)" opacity="0.7"/>
<path d="M622 374L628 378 606 412 595 430 591 428 604 402Z" fill="#4c4c4c" filter="url(#fb2)" opacity="0.6"/>
</g>
<path d="M629 296L621 294.500M629 299.500L623 300M630 293.500L624 291.500" stroke="#1a1a1a" stroke-width="0.900" opacity="0.550" filter="url(#fb1)" fill="none"/>
</g>
<clipPath id="frontc"><path d="M656 165H692V300L683 328 680.300 340 674.500 327 668 303 662 296H656ZM612 258H652.500V301H612Z"/></clipPath>
</defs>
</svg>
<!-- workspace -->
<div class="a" style="left:160px;top:134px;width:1px;height:492px;background:#d2d2d2"></div>
<div class="a" style="left:161px;top:598px;width:863px;height:1px;background:#d4d4d4"></div>
<!-- slide -->
<div class="a" style="left:189px;top:139px;width:796px;height:448px;background:#fff;box-shadow:0 0 0 0.5px #dcdcdc"></div>
<svg width="299" height="448" viewBox="0 0 299 448" style="left:437px;top:139px;overflow:hidden;will-change:transform">
<defs>
<g id="photo">
<rect width="299" height="448" fill="url(#bgv)"/>
<rect width="299" height="448" fill="url(#bgl)"/>
<rect width="299" height="448" fill="url(#bgh)"/>
<path d="M-30 322L51 328 103 336 150 348 182 368 194 400 190 430 176 470-30 470Z" fill="#000" opacity="0.13" filter="url(#fb4)"/>
<path d="M-40 326L30 332 62 352 78 396 64 440 30 470-40 470Z" fill="url(#pen)" filter="url(#fb10)"/>
<path d="M-30 398Q60 400 126 412T160 421" stroke="#000" stroke-width="46" stroke-linecap="round" fill="none" opacity="0.52" filter="url(#fb14)"/>
<ellipse cx="88" cy="397" rx="52" ry="11" fill="#000" opacity="0.34" filter="url(#fb6)" transform="rotate(6 88 397)"/>
<ellipse cx="132" cy="412" rx="36" ry="16" fill="#000" opacity="0.5" filter="url(#fb6)" transform="rotate(10 134 415)"/>
<ellipse cx="176" cy="410" rx="12" ry="6" fill="#000" opacity="0.42" filter="url(#fb3)"/>
<ellipse cx="232" cy="425" rx="14" ry="5" fill="#000" opacity="0.36" filter="url(#fb3)"/>
<g transform="translate(-437,-139)"><use href="#fig" transform="translate(-54,-8)"/></g>
<g font-family="'DejaVu Sans Mono','Liberation Mono',monospace" font-weight="bold" font-size="90" fill="#fff">
<text transform="translate(50.750,204.800) scale(0.968,1)">M</text>
<text transform="translate(104.850,204.800)">O</text>
<text transform="translate(159.100,204.800) scale(1.040,1)">V</text>
<text transform="translate(216.050,204.800) scale(1.090,1)">E</text>
</g>
<g transform="translate(-437,-139)">
<g transform="translate(-54,-8)"><g clip-path="url(#frontc)"><use href="#fig"/></g></g>
<use href="#fig"/>
</g>
</g>
</defs>
<use href="#photo"/>
</svg>
<!-- thumbnail -->
<div class="a" style="left:23px;top:146px;width:119.500px;height:67px;background:#fff;border:2px solid #c0502f"></div>
<svg width="44.500" height="66.700" viewBox="0 0 299 448" style="left:62.800px;top:148.300px;overflow:hidden;will-change:transform"><use href="#photo"/></svg>
<!-- selection -->
<svg width="1024" height="463" viewBox="0 134 1024 463" style="left:0;top:134px;overflow:hidden" fill="none">
<path d="M640.500 134v13" stroke="#8a8a8a" stroke-width="0.900"/>
<path d="M736 147.500H790.500V595.500H736" stroke="#a4a4a4" stroke-width="1"/>
<path d="M490.500 587V595.500H736" stroke="#a4a4a4" stroke-width="1"/>
<path d="M736 147.500H490.500V587" stroke="#9a9a9a" stroke-width="0.700" opacity="0.380"/>
<g fill="#fff" stroke="#6e6e6e" stroke-width="1">
<circle cx="490.500" cy="147.300" r="3.100"/><circle cx="640.500" cy="147.300" r="3.100"/><circle cx="790.300" cy="147.300" r="3.600"/>
<circle cx="490.500" cy="371.300" r="3.100"/><circle cx="790.300" cy="371.300" r="3.600"/>
<circle cx="490.500" cy="595.600" r="3.600"/><circle cx="640.500" cy="595.600" r="3.600"/><circle cx="790.300" cy="595.600" r="3.600"/>
</g>
</svg>
<!-- scrollbar -->
<div class="a" style="left:1011.500px;top:134px;width:12.500px;height:438px;background:#f0f0f0"></div>
<div class="a" style="left:1011.500px;top:135px;width:11px;height:10.500px;background:#fff;border:0.800px solid #c6c6c6"></div>
<div class="a" style="left:1011.500px;top:572px;width:11px;height:10.500px;background:#fff;border:0.800px solid #c6c6c6"></div>
<div class="a" style="left:1012px;top:307px;width:12px;height:204px;background:#fff;border:0.800px solid #c6c6c6;box-sizing:border-box"></div>
<svg width="14" height="460" viewBox="1010 130 14 460" style="left:1010px;top:130px"><path d="M1015 142.200h5.400l-2.700-3.200zM1015 576.600h5.400l-2.700 3.200z" fill="#111"/></svg>
<!-- status bar -->
<div class="a" style="left:0;top:625.500px;width:1024px;height:23px;background:#f3f3f3"></div>
<div class="a" style="left:0;top:648.300px;width:1024px;height:2px;background:#b4c8da"></div>
<div class="a" style="left:755.300px;top:626px;width:29.500px;height:22.300px;background:#c6c6c6"></div>
<svg width="1024" height="24" viewBox="0 626 1024 24" style="left:0;top:626px" fill="none" stroke="#6a6a6a" stroke-width="0.800">
<!-- spell icon -->
<path d="M70.600 633.400h3.600v7.600h-3.600zM75 633.400h3.800v3M75 633.400v7.600h2" stroke="#8a8a8a" stroke-width="0.700"/>
<path d="M76.800 638.600l1.200 1.400 2-2.800" stroke="#6a6a6a" stroke-width="0.800"/>
<!-- accessibility icon -->
<path d="M249.600 634.800a3.600 3.600 0 1 0-1.600 6" stroke="#444" stroke-width="0.800"/>
<path d="M246.400 635v2.600h2.400" stroke="#444" stroke-width="0.700"/>
<path d="M248.600 638.200l3.600 3.600M252.200 638.200l-3.600 3.600" stroke="#333" stroke-width="1"/>
<!-- notes icon -->
<path d="M637 638.800h8.400M637 640.800h8.400M638.600 636.800h5.200" stroke="#6a6a6a" stroke-width="0.800"/>
<path d="M639.800 635.400l1.400-1.600 1.400 1.600z" fill="#6a6a6a" stroke="none"/>
<!-- comments icon -->
<path d="M690 633h9.800v6.200h-5.400l-2.400 2.400v-2.400h-2z" fill="#444" stroke="none"/>
<!-- normal view -->
<rect x="765.200" y="633.200" width="9.200" height="8.400" stroke="#5e5e5e"/>
<path d="M767.600 633.200v8.400M769.200 639.800h4" stroke="#5e5e5e"/>
<rect x="770" y="635" width="2.800" height="2.800" stroke="#5e5e5e" stroke-width="0.700"/>
<!-- sorter -->
<g stroke="#7a7a7a"><rect x="795" y="633.400" width="3.600" height="3.200"/><rect x="800.200" y="633.400" width="3.600" height="3.200"/><rect x="795" y="638.200" width="3.600" height="3.200"/><rect x="800.200" y="638.200" width="3.600" height="3.200"/></g>
<!-- reading view -->
<path d="M829 634.200v7.200M824.400 633.600h4.600v7.400h-4.600zM829 633.600h4.600v7.400h-4.600z" stroke="#8a8a8a"/>
<path d="M825.600 635.400h2.200M825.600 637h2.200M825.600 638.600h2.200M830.200 635.400h2.200M830.200 637h2.200M830.200 638.600h2.200" stroke="#a0a0a0" stroke-width="0.600"/>
<!-- slideshow -->
<path d="M853.400 633.400h9.400M854.400 633.600v4.600h7.400v-4.600M858.100 638.200v2.600M856 641.400h4.200" stroke="#7a7a7a"/>
<!-- zoom -->
<path d="M876.600 637.400h4.800" stroke="#777"/>
<path d="M886.400 637.400h69.600" stroke="#6a6a6a" stroke-width="0.900"/>
<path d="M921.200 635v4.800" stroke="#6a6a6a" stroke-width="0.800"/>
<rect x="914.800" y="633.400" width="3.800" height="8" fill="#3e3e3e" stroke="none"/>
<path d="M960.200 637.400h5M962.700 634.900v5" stroke="#777"/>
<!-- fit -->
<rect x="1010" y="634" width="6.600" height="6.600" stroke="#7a7a7a" stroke-width="0.700"/>
<path d="M1011.400 636.600v-1.200h1.200M1015.200 636.600v-1.200h-1.200M1011.400 638v1.200h1.200M1015.200 638v1.200h-1.200" stroke="#7a7a7a" stroke-width="0.600"/>
</svg>
<div id="labels" class="a" style="left:0;top:0;width:1024px;height:650px;will-change:transform">
<span class="t" style="left:384.0px;top:6.6px;font-size:8.6px;letter-spacing:-0.08px;color:#fff;">New Microsoft PowerPoint Presentation.pptx</span>
<span class="t" style="left:555.4px;top:6.6px;font-size:8.6px;color:#fff;">-</span>
<span class="t" style="left:563.0px;top:6.6px;font-size:8.6px;letter-spacing:-0.22px;color:#fff;">PowerPoint</span>
<span class="t" style="left:720.0px;top:5.4px;font-size:7.1px;letter-spacing:0.02px;color:#f3ddd6;">Picture Tools</span>
<span class="t" style="left:833.2px;top:5.9px;font-size:7.1px;letter-spacing:-0.02px;color:#fff;">Taffy Tan</span>
<span class="t" style="left:17.0px;top:28.7px;font-size:8.6px;letter-spacing:-0.45px;color:#fff;">File</span>
<span class="t" style="left:58.0px;top:28.7px;font-size:8.6px;letter-spacing:0.02px;color:#fff;">Home</span>
<span class="t" style="left:103.5px;top:28.7px;font-size:8.6px;letter-spacing:-0.16px;color:#fff;">Insert</span>
<span class="t" style="left:146.5px;top:28.7px;font-size:8.6px;letter-spacing:-0.19px;color:#fff;">Draw</span>
<span class="t" style="left:188.0px;top:28.7px;font-size:8.6px;letter-spacing:-0.11px;color:#fff;">Design</span>
<span class="t" style="left:236.5px;top:28.7px;font-size:8.6px;letter-spacing:-0.19px;color:#fff;">Transitions</span>
<span class="t" style="left:298.0px;top:28.7px;font-size:8.6px;letter-spacing:0.05px;color:#fff;">Animations</span>
<span class="t" style="left:363.0px;top:28.7px;font-size:8.6px;letter-spacing:-0.11px;color:#fff;">Slide Show</span>
<span class="t" style="left:426.5px;top:28.7px;font-size:8.6px;letter-spacing:-0.30px;color:#fff;">Record</span>
<span class="t" style="left:474.5px;top:28.7px;font-size:8.6px;letter-spacing:-0.34px;color:#fff;">Review</span>
<span class="t" style="left:523.0px;top:28.7px;font-size:8.6px;letter-spacing:-0.16px;color:#fff;">View</span>
<span class="t" style="left:562.5px;top:28.7px;font-size:8.6px;letter-spacing:0.14px;color:#fff;">Add-ins</span>
<span class="t" style="left:614.5px;top:28.7px;font-size:8.6px;letter-spacing:-0.06px;color:#fff;">Help</span>
<span class="t" style="left:655.7px;top:28.7px;font-size:8.3px;letter-spacing:-0.07px;color:#fff;">百度网盘</span>
<span class="t" style="left:712.4px;top:28.7px;font-size:8.6px;letter-spacing:-0.16px;color:#b7472a;">Picture Format</span>
<span class="t" style="left:808.0px;top:28.7px;font-size:8.6px;letter-spacing:0.04px;color:#fff;">Tell me what you want to do</span>
<span class="t" style="left:18.2px;top:80.2px;font-size:8.6px;letter-spacing:-0.44px;">Remove</span>
<span class="t" style="left:10.5px;top:91.8px;font-size:8.6px;letter-spacing:-0.15px;">Background</span>
<span class="t" style="left:59.5px;top:80.2px;font-size:8.6px;letter-spacing:-0.15px;">Corrections</span>
<span class="t" style="left:131.0px;top:56.0px;font-size:8.6px;letter-spacing:-0.09px;">Color</span>
<span class="t" style="left:131.0px;top:79.2px;font-size:8.6px;letter-spacing:-0.14px;">Artistic Effects</span>
<span class="t" style="left:115.5px;top:122.2px;font-size:7.9px;letter-spacing:-0.13px;">Adjust</span>
<span class="t" style="left:411.0px;top:122.2px;font-size:7.9px;letter-spacing:-0.39px;">Picture Styles</span>
<span class="t" style="left:548.5px;top:52.6px;font-size:8.6px;letter-spacing:-0.19px;">Picture Border</span>
<span class="t" style="left:550.5px;top:76.5px;font-size:8.6px;letter-spacing:-0.25px;">Picture Effects</span>
<span class="t" style="left:550.5px;top:98.2px;font-size:8.6px;letter-spacing:-0.19px;">Picture Layout</span>
<span class="t" style="left:647.0px;top:80.2px;font-size:8.6px;letter-spacing:0.48px;">Alt</span>
<span class="t" style="left:645.6px;top:91.8px;font-size:8.6px;letter-spacing:-0.72px;">Text</span>
<span class="t" style="left:632.2px;top:122.2px;font-size:7.9px;letter-spacing:-0.28px;">Accessibility</span>
<span class="t" style="left:712.5px;top:54.6px;font-size:8.6px;letter-spacing:-0.12px;">Bring Forward</span>
<span class="t" style="left:712.5px;top:76.5px;font-size:8.6px;letter-spacing:-0.29px;">Send Backward</span>
<span class="t" style="left:714.5px;top:98.2px;font-size:8.6px;letter-spacing:-0.33px;">Selection Pane</span>
<span class="t" style="left:747.0px;top:122.2px;font-size:7.9px;letter-spacing:-0.21px;">Arrange</span>
<span class="t" style="left:862.5px;top:86.8px;font-size:8.6px;letter-spacing:-0.38px;">Crop</span>
<span class="t" style="left:898.0px;top:122.2px;font-size:7.9px;letter-spacing:-0.79px;">Size</span>
<span class="t" style="left:919.0px;top:63.2px;font-size:8.6px;letter-spacing:-0.20px;">7.5&quot;</span>
<span class="t" style="left:919.0px;top:94.8px;font-size:8.6px;letter-spacing:0.16px;">5&quot;</span>
<span class="t" style="left:9.2px;top:144.8px;font-size:10.6px;color:#c9583a;">1</span>
<span class="t" style="left:169.5px;top:603.5px;font-size:11.2px;letter-spacing:-0.35px;color:#505050;">Tap to add notes</span>
<span class="t" style="left:12.3px;top:631.4px;font-size:7.7px;letter-spacing:-0.21px;">Slide 1 of 1</span>
<span class="t" style="left:101.6px;top:631.4px;font-size:7.7px;letter-spacing:-0.17px;">Chinese (Simplified, Mainland China)</span>
<span class="t" style="left:254.6px;top:631.4px;font-size:7.7px;letter-spacing:-0.13px;font-weight:bold;color:#2c2c2c;">Accessibility: Investigate</span>
<span class="t" style="left:648.4px;top:631.4px;font-size:7.7px;letter-spacing:-0.20px;">Notes</span>
<span class="t" style="left:702.0px;top:631.4px;font-size:7.7px;letter-spacing:-0.17px;">Comments</span>
<span class="t" style="left:978.0px;top:631.4px;font-size:7.7px;letter-spacing:-0.10px;">88%</span>
</div>
</body>
</html>
